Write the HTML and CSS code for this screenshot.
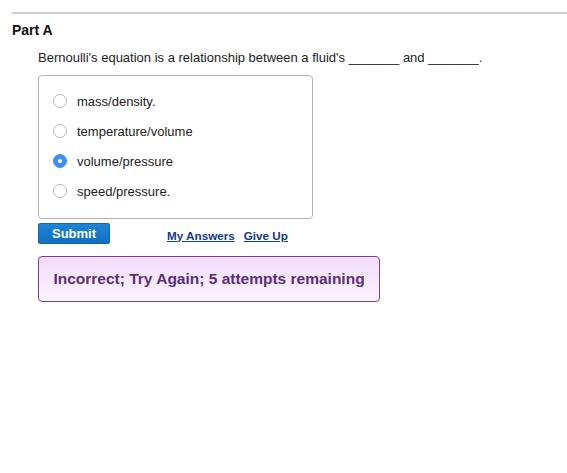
FILE: index.html
```html
<!DOCTYPE html>
<html>
<head>
<meta charset="utf-8">
<link rel="stylesheet" href="styles.css">
</head>
<body>
<div class="page">
  <hr class="rule">
  <h2 class="part-title">Part A</h2>
  <div class="content">
    <p class="question">Bernoulli's equation is a relationship between a fluid's _______ and _______.</p>
    <div class="options">
      <label class="option"><span class="radio"></span><span class="opt-text">mass/density.</span></label>
      <label class="option"><span class="radio"></span><span class="opt-text">temperature/volume</span></label>
      <label class="option"><span class="radio checked"></span><span class="opt-text">volume/pressure</span></label>
      <label class="option"><span class="radio"></span><span class="opt-text">speed/pressure.</span></label>
    </div>
    <div class="actions">
      <button class="submit">Submit</button>
      <div class="links">
        <a class="link" href="#">My Answers</a>
        <a class="link" href="#">Give Up</a>
      </div>
    </div>
    <div class="feedback">Incorrect; Try Again; 5 attempts remaining</div>
  </div>
</div>
</body>
</html>
```
FILE: styles.css
```css
html, body {
  margin: 0;
  padding: 0;
  background: #fff;
}
body {
  font-family: "Liberation Sans", Arial, sans-serif;
  color: #222;
}
.page {
  padding-top: 12px;
}
.rule {
  margin: 0 0 0 12px;
  border: 0;
  border-top: 2px solid #cfcfcf;
  height: 0;
}
.part-title {
  margin: 8px 0 0 12px;
  font-size: 14px;
  font-weight: bold;
  line-height: 16px;
  color: #111;
}
.content {
  margin-left: 38px;
}
.question {
  margin: 12px 0 0 0;
  font-size: 13px;
  line-height: 15px;
  color: #222;
}
.options {
  margin-top: 10px;
  width: 275px;
  height: 144px;
  border: 1px solid #b4b4b4;
  border-radius: 4px;
  padding-top: 18px;
  box-sizing: border-box;
  display: flex;
  flex-direction: column;
  gap: 16px;
}
.option {
  display: flex;
  align-items: center;
  height: 14px;
  padding-left: 14px;
  font-size: 13px;
  color: #222;
}
.radio {
  width: 14px;
  height: 14px;
  border: 1px solid #b8b8b8;
  border-radius: 50%;
  background: #fff;
  box-sizing: border-box;
  margin-right: 10px;
  display: flex;
  align-items: center;
  justify-content: center;
  flex-shrink: 0;
}
.radio.checked {
  background: #3d8ef0;
  border-color: #3d8ef0;
}
.radio.checked::after {
  content: "";
  width: 4px;
  height: 4px;
  border-radius: 50%;
  background: #fff;
}
.actions {
  margin-top: 4px;
  display: flex;
  align-items: center;
}
.submit {
  width: 72px;
  height: 21px;
  padding: 0;
  border: 1px solid #1566a8;
  border-radius: 2px;
  background: linear-gradient(#1d85d6, #0f6fc0);
  color: #fff;
  font-family: "Liberation Sans", Arial, sans-serif;
  font-weight: bold;
  font-size: 13px;
  line-height: 19px;
}
.links {
  margin-left: 57px;
  display: flex;
  gap: 9px;
  padding-top: 3px;
}
.link {
  font-size: 11.7px;
  font-weight: bold;
  color: #123a8c;
  text-decoration: underline;
}
.feedback {
  margin-top: 12px;
  width: 342px;
  height: 46px;
  box-sizing: border-box;
  border: 1px solid #7b3f95;
  border-radius: 4px;
  background: linear-gradient(#f1dcfa, #fcf3ff);
  color: #59307a;
  font-size: 15.5px;
  font-weight: bold;
  display: flex;
  align-items: center;
  justify-content: center;
}
```
